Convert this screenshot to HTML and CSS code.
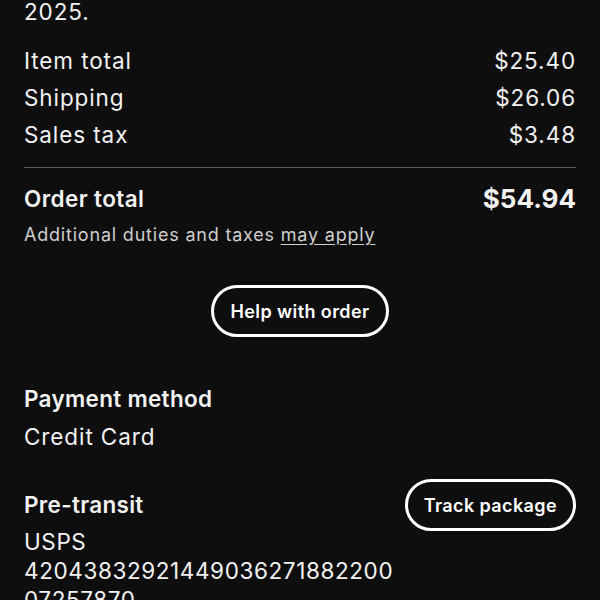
FILE: index.html
```html
<!DOCTYPE html>
<html lang="en">
<head>
    <meta charset="utf-8" />
    <title>Order details</title>
    <link rel="stylesheet" href="styles.css">
</head>
<body>
    <div class="page">
        <p class="note">2025.</p>

        <div class="summary">
            <div class="row"><span>Item total</span><span>$25.40</span></div>
            <div class="row"><span>Shipping</span><span>$26.06</span></div>
            <div class="row"><span>Sales tax</span><span>$3.48</span></div>
        </div>

        <div class="total">
            <div class="row total-row"><span>Order total</span><span class="total-amount">$54.94</span></div>
            <p class="duties">Additional duties and taxes <a href="#">may apply</a></p>
        </div>

        <div class="center">
            <button class="pill">Help with order</button>
        </div>

        <div class="section">
            <h2>Payment method</h2>
            <p>Credit Card</p>
        </div>

        <div class="section shipping">
            <div class="ship-head">
                <h2>Pre-transit</h2>
                <button class="pill">Track package</button>
            </div>
            <p class="tracking">USPS<br>42043832921449036271882200<br>07257870</p>
        </div>
    </div>
</body>
</html>
```

FILE: styles.css
```css
html, body {
    margin: 0;
    background: #0e0e0e;
}

.page {
    font-family: Inter, "Noto Sans", sans-serif;
    color: #f2f2f2;
    padding: 0 24px;
    font-size: 22.5px;
    letter-spacing: 0.9px;
}

p {
    margin: 0;
}

.note {
    line-height: 28px;
    margin-top: -2px;
}

.summary {
    margin-top: 16px;
    padding-bottom: 14px;
    border-bottom: 1px solid #5a5a5a;
}

.row {
    display: flex;
    justify-content: space-between;
    align-items: center;
    height: 37px;
}

.total {
    margin-top: 12px;
}

.total-row {
    font-weight: 600;
    height: 36px;
    letter-spacing: 0.4px;
}

.total-amount {
    font-size: 26px;
    font-weight: 700;
    letter-spacing: 0;
}

.duties {
    font-size: 18px;
    color: #cfcfcf;
    line-height: 30px;
    letter-spacing: 0.8px;
    margin-top: 4px;
}

.duties a {
    color: #cfcfcf;
    text-decoration: underline;
    text-underline-offset: 3px;
}

.center {
    display: flex;
    justify-content: center;
    margin-top: 35px;
}

.pill {
    font-family: Inter, "Noto Sans", sans-serif;
    font-size: 18px;
    font-weight: 600;
    color: #fff;
    background: #0e0e0e;
    border: 3px solid #fff;
    border-radius: 26px;
    height: 52px;
    padding: 0 16px;
    letter-spacing: 0.4px;
}

.section {
    margin-top: 44px;
}

.section h2 {
    font-size: 22.5px;
    font-weight: 600;
    margin: 0;
    line-height: 36px;
    letter-spacing: 0.3px;
}

.section p {
    line-height: 40px;
}

.shipping {
    margin-top: 22px;
}

.ship-head {
    display: flex;
    justify-content: space-between;
    align-items: center;
}

.section .tracking {
    line-height: 29px;
    margin-top: -4px;
    letter-spacing: 0.6px;
}
```
